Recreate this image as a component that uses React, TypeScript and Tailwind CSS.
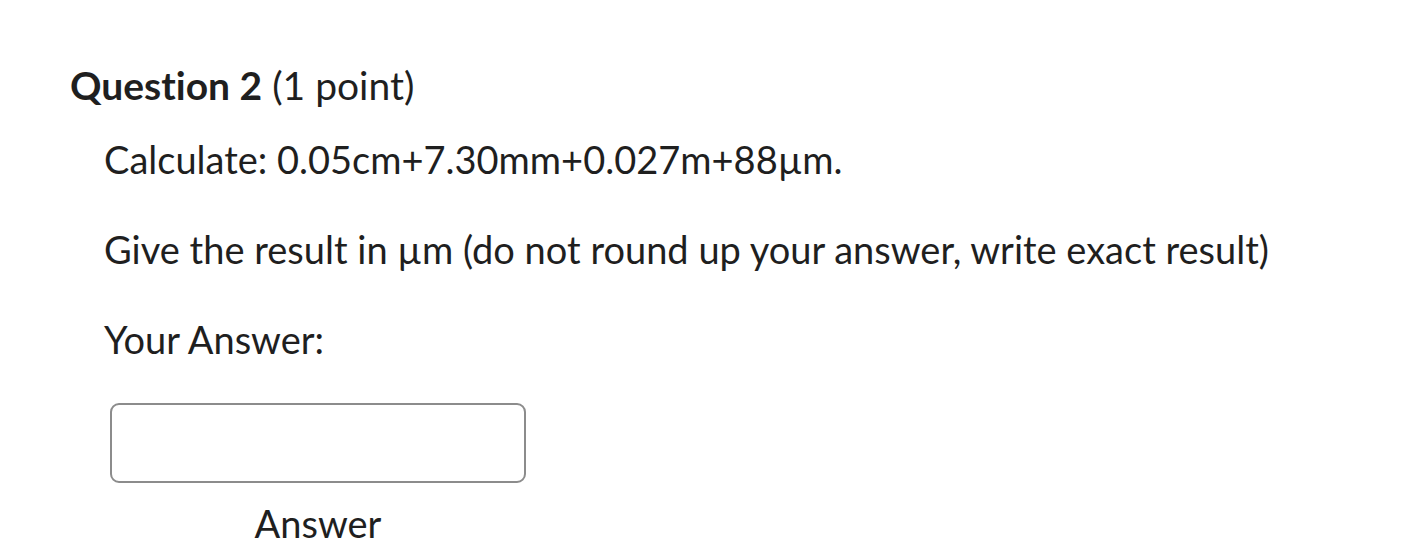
export default function App() {
  return (
    <div className="bg-white w-[1402px] h-[550px] overflow-hidden font-['Lato',sans-serif] text-[#1f1f1f] [font-variant-ligatures:none]">
      <div className="pt-[60px] pl-[70px]">
        <h2 className="text-[39px] leading-[50px]">
          <span className="font-bold">Question 2</span> <span>(1 point)</span>
        </h2>
        <div className="pl-[34px] text-[38px] leading-[46px]">
          <p className="mt-[26px]">Calculate: 0.05cm+7.30mm+0.027m+88µm.</p>
          <p className="mt-[44px]">Give the result in µm (do not round up your answer, write exact result)</p>
          <p className="mt-[44px]">Your Answer:</p>
          <div className="mt-[41px] ml-[6px] w-[416px] flex flex-col items-center">
            <input
              type="text"
              aria-label="Answer"
              className="w-[416px] h-[80px] border-2 border-[#8c8c8c] rounded-[9px] bg-white outline-none"
            />
            <span className="mt-[17px]">Answer</span>
          </div>
        </div>
      </div>
    </div>
  );
}
